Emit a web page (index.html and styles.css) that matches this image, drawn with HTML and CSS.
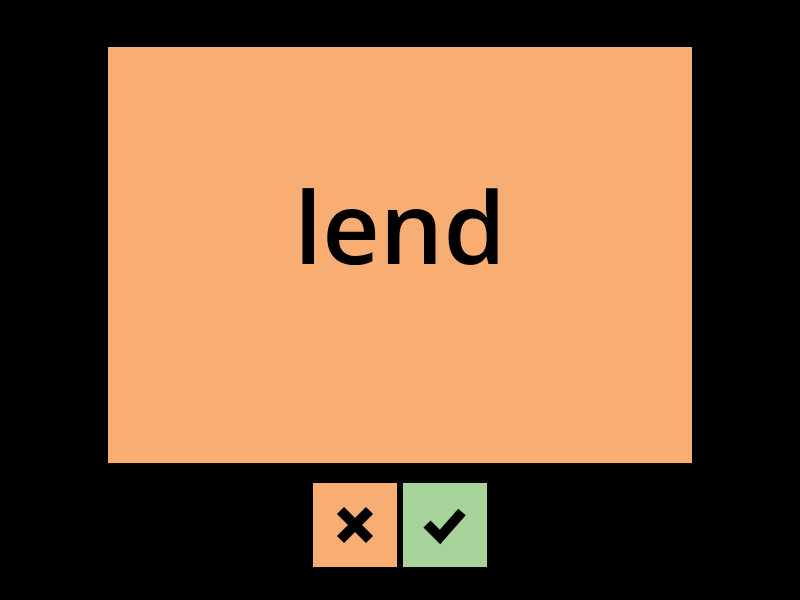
FILE: index.html
```html
<!DOCTYPE html>
<html>
<head>
<meta charset="utf-8">
<link rel="stylesheet" href="styles.css">
</head>
<body>
<div class="page">
  <div class="card"><span class="word">lend</span></div>
  <div class="buttons">
    <div class="btn btn-wrong">
      <svg class="icon" width="84" height="84" viewBox="0 0 84 84">
        <path d="M27.5 27.5 L56.5 56.5 M56.5 27.5 L27.5 56.5" stroke="#000" stroke-width="10" fill="none"/>
      </svg>
    </div>
    <div class="btn btn-right">
      <svg class="icon" width="84" height="84" viewBox="0 0 84 84">
        <polyline points="24,41 37,54 59,29" stroke="#000" stroke-width="10" fill="none" stroke-linejoin="miter"/>
      </svg>
    </div>
  </div>
</div>
</body>
</html>
```
FILE: styles.css
```css
html, body {
  margin: 0;
  padding: 0;
  background: #000;
  width: 800px;
  height: 600px;
  overflow: hidden;
}
.page {
  display: flex;
  flex-direction: column;
  align-items: center;
  padding-top: 47px;
}
.card {
  width: 584px;
  height: 416px;
  background: #f8ad73;
  display: flex;
  justify-content: center;
  align-items: flex-start;
  box-sizing: border-box;
  padding-top: 128px;
}
.word {
  font-family: "Open Sans", "Noto Sans", sans-serif;
  font-size: 100px;
  font-weight: 600;
  line-height: 100px;
  color: #000;
}
.buttons {
  display: flex;
  gap: 6px;
  margin-top: 20px;
}
.btn {
  width: 84px;
  height: 84px;
}
.icon {
  display: block;
}
.btn-wrong { background: #f8ad73; }
.btn-right { background: #a7d39b; }
```
